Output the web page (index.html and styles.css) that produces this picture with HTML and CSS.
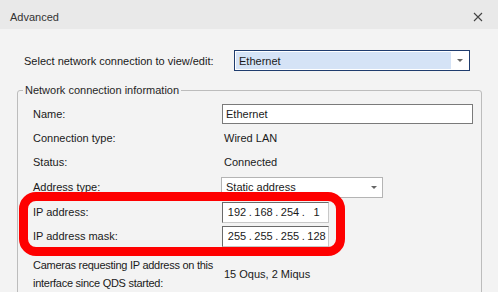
FILE: index.html
```html
<!DOCTYPE html>
<html>
<head>
<meta charset="utf-8">
<link rel="stylesheet" href="styles.css">
</head>
<body>
<div class="window">
  <div class="titlebar">
    <span class="title">Advanced</span>
    <svg class="close" width="10" height="10" viewBox="0 0 10 10"><path d="M1 1 L9 9 M9 1 L1 9" stroke="#444" stroke-width="1.1" fill="none"/></svg>
  </div>
  <div class="content">
    <div class="select-row">
      <span class="select-label">Select network connection to view/edit:</span>
      <div class="combo focused">
        <span class="combo-text">Ethernet</span>
        <span class="combo-btn"><span class="arrow"></span></span>
      </div>
    </div>
    <fieldset class="group">
      <legend>Network connection information</legend>
      <div class="grid">
        <span class="lbl">Name:</span>
        <div class="textbox">Ethernet</div>
        <span class="lbl">Connection type:</span>
        <span class="val">Wired LAN</span>
        <span class="lbl">Status:</span>
        <span class="val">Connected</span>
        <span class="lbl">Address type:</span>
        <div class="combo plain">
          <span class="combo-text">Static address</span>
          <span class="combo-btn"><span class="arrow"></span></span>
        </div>
        <span class="lbl">IP address:</span>
        <div class="ipbox">
          <span class="oct">192</span><span class="dot">.</span><span class="oct">168</span><span class="dot">.</span><span class="oct">254</span><span class="dot">.</span><span class="oct">1</span>
        </div>
        <span class="lbl">IP address mask:</span>
        <div class="ipbox">
          <span class="oct">255</span><span class="dot">.</span><span class="oct">255</span><span class="dot">.</span><span class="oct">255</span><span class="dot">.</span><span class="oct">128</span>
        </div>
        <span class="lbl two">Cameras requesting IP address on this<br>interface since QDS started:</span>
        <span class="val cams">15 Oqus, 2 Miqus</span>
      </div>
    </fieldset>
  </div>
  <div class="highlight"></div>
</div>
</body>
</html>
```

FILE: styles.css
```css
* { box-sizing: border-box; }
html, body { margin: 0; padding: 0; }
body {
  width: 498px;
  height: 292px;
  overflow: hidden;
  background: #f3f3f3;
  font-family: "Liberation Sans", Arial, sans-serif;
  font-size: 11px;
  color: #1a1a1a;
}
.window { position: relative; width: 498px; height: 292px; overflow: hidden; }
.titlebar {
  height: 29px;
  background: #e9e9e9;
  display: flex;
  align-items: center;
  justify-content: space-between;
  padding: 4px 15px 0 10px;
}
.title { color: #333; font-size: 11px; }
.close { display: block; }
.content { padding: 21px 0 0 17px; }
.select-row { display: flex; align-items: center; height: 21px; }
.select-label { width: 217px; padding-left: 7px; }
.combo {
  display: flex;
  align-items: stretch;
  background: #fff;
  height: 21px;
}
.combo.focused {
  width: 236px;
  border: 1px solid #1f3c6e;
  padding: 1px;
}
.combo.focused .combo-text { background: #d5e3f6; flex: 1; padding-left: 3px; display: flex; align-items: center; }
.combo.focused .combo-btn { width: 17px; }
.combo.plain {
  width: 162px;
  margin-left: -1px;
  border: 1px solid #b4b4b4;
}
.combo.plain .combo-text { flex: 1; padding-left: 4px; display: flex; align-items: center; }
.combo.plain .combo-btn { width: 17px; }
.combo-btn { display: flex; align-items: center; justify-content: center; }
.arrow {
  width: 0; height: 0;
  border-left: 3px solid transparent;
  border-right: 3px solid transparent;
  border-top: 3px solid #666;
}
.group {
  margin: 12px 0 0 0;
  width: 465px;
  height: 240px;
  border: 1px solid #bcbcbc;
  border-radius: 3px;
  padding: 0 0 0 15px;
}
.group legend {
  padding: 0 2px;
  margin-left: -10px;
  color: #262626;
  line-height: 14px;
}
.grid {
  display: grid;
  grid-template-columns: 189px 251px;
  grid-template-rows: 24px 24px 24px 26px 24px 24px auto;
  align-items: center;
  margin-top: 5px;
}
.lbl { white-space: nowrap; }
.val { padding-left: 2px; }
.val.cams { margin-top: 8px; }
.textbox {
  height: 20px;
  border: 1px solid #7a7a7a;
  background: #fff;
  padding-left: 3px;
  display: flex;
  align-items: center;
}
.ipbox {
  width: 107px;
  height: 21px;
  border: 1px solid #c8c8c8;
  border-top-color: #6a6a6a;
  border-left-color: #6a6a6a;
  background: #fff;
  display: flex;
  align-items: center;
  padding-left: 4px;
  font-size: 11px;
}
.oct { width: 20px; text-align: center; }
.dot { width: 6.5px; text-align: center; }
.lbl.two { line-height: 18px; margin-top: 8px; letter-spacing: -0.27px; }
.highlight {
  position: absolute;
  left: 19px;
  top: 192px;
  width: 326px;
  height: 64px;
  border: 9px solid #fe0000;
  border-radius: 17px;
}
```
